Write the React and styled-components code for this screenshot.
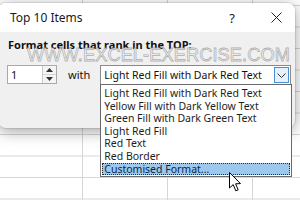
import React from "react";
import styled, { createGlobalStyle } from "styled-components";

const Global = createGlobalStyle`
  html, body { margin: 0; padding: 0; }
  body { width: 300px; height: 200px; overflow: hidden; background: #fff; }
`;

const Screen = styled.div`
  position: relative;
  width: 300px;
  height: 200px;
  overflow: hidden;
  background-color: #fff;
  background-image: linear-gradient(to right, #d6d6d6 1px, transparent 1px),
    linear-gradient(to bottom, #d6d6d6 1px, transparent 1px);
  background-size: 85px 21.5px;
  background-position: 82px 5px;
  font-family: "Noto Sans", "Liberation Sans", sans-serif;
`;

// the dialog window lies on top of the sheet
const Dialog = styled.div`
  position: absolute;
  left: -2px;
  top: 3px;
  width: 297px;
  height: 125px;
  border-radius: 8px;
  background: #f0f0f0;
  box-shadow: 0 3px 16px rgba(0, 0, 0, 0.38), 0 0 0 1px rgba(0, 0, 0, 0.08);
  display: flex;
  flex-direction: column;
`;

const TitleBar = styled.div`
  height: 29px;
  flex: none;
  display: flex;
  align-items: center;
  padding-left: 12px;
  background: #fff;
  border-radius: 8px 8px 0 0;
`;

const Title = styled.span`
  font-size: 12px;
  color: #1a1a1a;
  flex: 1;
`;

const TitleButtons = styled.div`
  display: flex;
  align-items: center;
  gap: 15px;
`;

const TitleButton = styled.span`
  width: ${(p) => p.w}px;
  display: flex;
  justify-content: center;
  font-size: 13px;
  color: #222;
`;

const Body = styled.div`
  flex: 1;
  padding: 7px 0 0 9px;
`;

const Prompt = styled.div`
  margin-left: 1px;
  font-size: 11px;
  line-height: 11px;
  font-weight: 700;
  color: #111;
`;

const Row = styled.div`
  margin-top: 15px;
  display: flex;
  align-items: flex-start;
`;

const Spinner = styled.div`
  width: 50px;
  height: 19px;
  box-sizing: border-box;
  border: 1px solid #a9a9a9;
  background: #fff;
  display: flex;
`;

const SpinValue = styled.span`
  flex: 1;
  padding-left: 3px;
  font-size: 11px;
  line-height: 17px;
  color: #111;
`;

const SpinButtons = styled.div`
  width: 13px;
  border-left: 1px solid #c8c8c8;
  display: flex;
  flex-direction: column;
  background: #f4f4f4;
`;

const SpinHalf = styled.div`
  flex: 1;
  display: flex;
  align-items: center;
  justify-content: center;
  border-top: ${(p) => (p.lower ? "1px solid #d4d4d4" : "none")};
`;

const With = styled.span`
  margin: 3px 10px 0 11px;
  font-size: 11px;
  line-height: 14px;
  color: #111;
`;

const Combo = styled.div`
  position: relative;
  width: 191px;
  height: 20px;
  box-sizing: border-box;
  border: 1px solid #8a8a8a;
  background: #fff;
  display: flex;
  align-items: center;
  padding-left: 3px;
`;

const ComboText = styled.span`
  flex: 1;
  font-size: 10.5px;
  color: #111;
  white-space: nowrap;
`;

const DropButton = styled.span`
  width: 15px;
  height: 16px;
  margin-right: 1px;
  box-sizing: border-box;
  border: 1px solid #4a8fd4;
  background: #e7f1fb;
  display: flex;
  align-items: center;
  justify-content: center;
`;

// open dropdown list hangs below the combo, over the sheet
const List = styled.div`
  position: absolute;
  left: -1px;
  top: 18px;
  width: 192px;
  box-sizing: border-box;
  border: 1px solid #6a6a6a;
  background: #fff;
  padding: 2px 1px 1px 1px;
`;

const Item = styled.div`
  height: 12.6px;
  line-height: 12.6px;
  padding-left: 2px;
  font-size: 10.5px;
  color: ${(p) => (p.active ? "#0b2545" : "#1e1e1e")};
  background: ${(p) => (p.active ? "#9dc8ee" : "transparent")};
  outline: ${(p) => (p.active ? "1px dotted #2a2a2a" : "none")};
  outline-offset: -1px;
  white-space: nowrap;
`;

const Watermark = styled.div`
  position: absolute;
  left: 27px;
  top: 49px;
  font-family: "Liberation Sans", Arial, sans-serif;
  font-size: 18.2px;
  line-height: 13px;
  color: rgba(255, 255, 255, 0.85);
  -webkit-text-stroke: 0.8px rgba(150, 150, 150, 0.75);
  letter-spacing: 0.1px;
  white-space: nowrap;
  pointer-events: none;
`;

const Cursor = styled.svg`
  position: absolute;
  left: 229px;
  top: 172px;
`;

const items = [
  "Light Red Fill with Dark Red Text",
  "Yellow Fill with Dark Yellow Text",
  "Green Fill with Dark Green Text",
  "Light Red Fill",
  "Red Text",
  "Red Border",
  "Customised Format...",
];

const App = () => {
  return (
    <Screen>
      <Global />
      <Dialog>
        <TitleBar>
          <Title>Top 10 Items</Title>
          <TitleButtons>
            <TitleButton w={20}>?</TitleButton>
            <TitleButton w={38}>
              <svg width="11" height="11" viewBox="0 0 11 11">
                <path d="M0.5 0.5 L10.5 10.5 M10.5 0.5 L0.5 10.5" stroke="#222" strokeWidth="1" />
              </svg>
            </TitleButton>
          </TitleButtons>
        </TitleBar>
        <Body>
          <Prompt>Format cells that rank in the TOP:</Prompt>
          <Row>
            <Spinner>
              <SpinValue>1</SpinValue>
              <SpinButtons>
                <SpinHalf>
                  <svg width="7" height="4" viewBox="0 0 7 4">
                    <path d="M0 4 L3.5 0 L7 4 Z" fill="#333" />
                  </svg>
                </SpinHalf>
                <SpinHalf lower>
                  <svg width="7" height="4" viewBox="0 0 7 4">
                    <path d="M0 0 L7 0 L3.5 4 Z" fill="#333" />
                  </svg>
                </SpinHalf>
              </SpinButtons>
            </Spinner>
            <With>with</With>
            <Combo>
              <ComboText>Light Red Fill with Dark Red Text</ComboText>
              <DropButton>
                <svg width="9" height="5" viewBox="0 0 9 5">
                  <path d="M0.5 0.5 L4.5 4.5 L8.5 0.5" stroke="#333" strokeWidth="1" fill="none" />
                </svg>
              </DropButton>
              <List>
                {items.map((t, i) => (
                  <Item key={t} active={i === items.length - 1}>
                    {t}
                  </Item>
                ))}
              </List>
            </Combo>
          </Row>
        </Body>
      </Dialog>
      <Watermark>WWW.EXCEL-EXERCISE.COM</Watermark>
      <Cursor width="13" height="20" viewBox="0 0 13 20">
        <path
          d="M0.5 0.5 L0.5 16 L4.2 12.6 L6.8 18.8 L9.2 17.8 L6.6 11.8 L11.5 11.6 Z"
          fill="#fff"
          stroke="#000"
          strokeWidth="1"
          strokeLinejoin="round"
        />
      </Cursor>
    </Screen>
  );
};

export default App;
